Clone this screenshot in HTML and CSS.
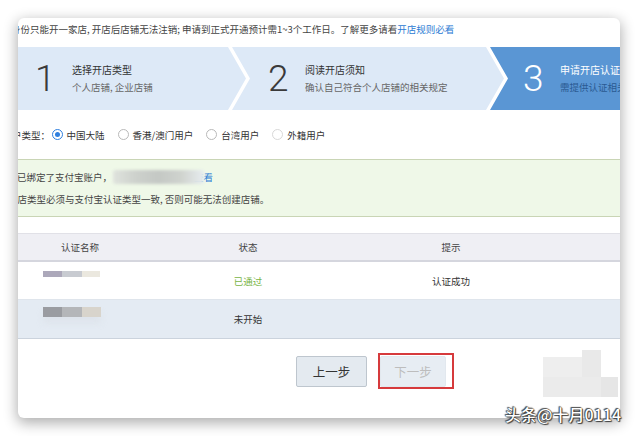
FILE: index.html
```html
<!DOCTYPE html>
<html>
<head>
<meta charset="utf-8">
<title>申请开店认证</title>
<link rel="stylesheet" href="styles.css">
</head>
<body>
<div class="card">
  <div class="notice"><span class="shift-notice">身份只能开一家店, 开店后店铺无法注销; 申请到正式开通预计需1~3个工作日。了解更多请看<a class="link">开店规则必看</a></span></div>

  <div class="steps">
    <div class="step step1">
      <div class="num">1</div>
      <div class="txt"><div class="t">选择开店类型</div><div class="s">个人店铺, 企业店铺</div></div>
    </div>
    <div class="step step2">
      <div class="num">2</div>
      <div class="txt"><div class="t">阅读开店须知</div><div class="s">确认自己符合个人店铺的相关规定</div></div>
    </div>
    <div class="step step3">
      <div class="num">3</div>
      <div class="txt"><div class="t">申请开店认证</div><div class="s">需提供认证相关资料</div></div>
    </div>
  </div>

  <div class="radios">
    <span class="radio-title">用户类型：</span>
    <span class="radio on"></span><span class="radio-label">中国大陆</span>
    <span class="radio"></span><span class="radio-label">香港/澳门用户</span>
    <span class="radio"></span><span class="radio-label">台湾用户</span>
    <span class="radio dim"></span><span class="radio-label">外籍用户</span>
  </div>

  <div class="alert">
    <div class="alert-line"><span class="shift-a1">您已绑定了支付宝账户，</span><span class="blurred"></span><a class="link">查看</a></div>
    <div class="alert-line"><span class="shift-a2">开店类型必须与支付宝认证类型一致, 否则可能无法创建店铺。</span></div>
  </div>

  <div class="table">
    <div class="tr th">
      <div class="cell">认证名称</div>
      <div class="cell">状态</div>
      <div class="cell">提示</div>
      <div class="cell"></div>
    </div>
    <div class="tr row1">
      <div class="cell name"><span class="mask mask1"></span></div>
      <div class="cell ok">已通过</div>
      <div class="cell">认证成功</div>
      <div class="cell"></div>
    </div>
    <div class="tr row2">
      <div class="cell name"><span class="mask mask2"></span></div>
      <div class="cell">未开始</div>
      <div class="cell"></div>
      <div class="cell"></div>
    </div>
  </div>

  <div class="actions">
    <button class="btn prev">上一步</button>
    <button class="btn next" disabled>下一步</button>
  </div>
</div>

<div class="highlight"></div>
<div class="mosaic">
  <span class="m m1"></span><span class="m m2"></span><span class="m m3"></span><span class="m m4"></span>
</div>
<div class="watermark">头条@十月0114</div>
</body>
</html>
```

FILE: styles.css
```css
* { box-sizing: border-box; margin: 0; padding: 0; }
html, body { background: #fff; }
body {
  width: 638px;
  height: 436px;
  overflow: hidden;
  position: relative;
  padding: 18px;
  font-family: "Noto Sans CJK SC", "Noto Sans", sans-serif;
  color: #333;
}

.card {
  width: 602px;
  height: 400px;
  background: #fff;
  border-radius: 6px;
  box-shadow: 0 4px 14px 1px rgba(0, 0, 0, 0.32);
  overflow: hidden;
  display: flex;
  flex-direction: column;
}

.link { color: #2b7bd4; text-decoration: none; }

/* notice */
.notice {
  height: 29px;
  padding-top: 3.5px;
  font-size: 9.5px;
  line-height: 14px;
  white-space: nowrap;
  color: #444;
}
.shift-notice { margin-left: -7px; }

/* steps */
.steps {
  height: 63px;
  display: flex;
  flex: none;
  background: #fff;
}
.step {
  display: flex;
  align-items: center;
  flex: none;
  white-space: nowrap;
  background: #dde9f7;
  min-width: 0;
}
.step1 {
  width: 228px;
  padding-left: 17px;
  clip-path: polygon(0 0, calc(100% - 18px) 0, 100% 50%, calc(100% - 18px) 100%, 0 100%);
}
.step2 {
  width: 272px;
  margin-left: -14px;
  padding-left: 36px;
  clip-path: polygon(0 0, calc(100% - 18px) 0, 100% 50%, calc(100% - 18px) 100%, 0 100%, 18px 50%);
}
.step3 {
  flex: 1;
  margin-left: -14px;
  padding-left: 33px;
  background: #5a96d4;
  clip-path: polygon(0 0, 100% 0, 100% 100%, 0 100%, 18px 50%);
}
.num {
  width: 37px;
  flex: none;
  font-family: Roboto, "Liberation Sans", sans-serif;
  font-weight: 300;
  font-size: 37px;
  line-height: 1;
  color: #3a3a3a;
}
.step3 .num { color: #fff; }
.txt .t { font-size: 10px; line-height: 14px; color: #333; }
.txt .s { font-size: 9.5px; line-height: 14px; color: #666; margin-top: 3.5px; }
.step3 .t { color: #fff; }
.step3 .s { color: #2a5a92; }

/* radios */
.radios {
  height: 49px;
  flex: none;
  display: flex;
  align-items: center;
  font-size: 9.5px;
  white-space: nowrap;
  color: #333;
}
.radio-title { margin-left: -15.5px; margin-right: 1.5px; }
.radio {
  width: 11px;
  height: 11px;
  border: 1px solid #b9b9b9;
  border-radius: 50%;
  background: #fff;
  margin-right: 4px;
  flex: none;
  display: flex;
  align-items: center;
  justify-content: center;
}
.radio.on { border-color: #2f7fdf; }
.radio.on::after {
  content: "";
  width: 5px;
  height: 5px;
  border-radius: 50%;
  background: #2f7fdf;
}
.radio.dim { border-color: #d8d8d8; }
.radio-label { margin-right: 13px; }

/* alert */
.alert {
  height: 58px;
  flex: none;
  background: #eff8e8;
  border-top: 1px solid #c9d5b5;
  border-bottom: 1px solid #c9d5b5;
  padding-top: 6px;
  font-size: 9.5px;
  line-height: 22px;
  white-space: nowrap;
  color: #444;
}
.alert-line { display: flex; align-items: center; height: 22px; }
.shift-a1 { margin-left: -10.5px; }
.shift-a2 { margin-left: -10px; }
.blurred {
  position: relative;
  z-index: 1;
  width: 91px;
  height: 14px;
  margin-left: 1px;
  margin-right: -10px;
  background: linear-gradient(90deg, #dfe3dd 0%, #cdd1cc 25%, #c4c8c4 50%, #cfd3ce 75%, #e6ecef 100%);
  filter: blur(1.5px);
  border-radius: 3px;
}

/* table */
.table { margin-top: 16px; flex: none; font-size: 9.5px; }
.tr {
  display: grid;
  grid-template-columns: 124px 212px 194px 1fr;
  align-items: center;
}
.cell { text-align: center; white-space: nowrap; }
.th {
  height: 29px;
  background: #efeff4;
  border-top: 1px solid #e1e1e7;
  border-bottom: 2px solid #d5d6de;
  color: #444;
}
.row1 { height: 38px; background: #fff; border-bottom: 1px solid #dfe5ec; }
.row2 { height: 39px; background: #e4ebf3; border-bottom: 1px solid #cbd3dd; }
.ok { color: #78b446; }
.name { align-self: start; text-align: left; padding-left: 25px; }
.row1 .name { padding-top: 9px; }
.row2 .name { padding-top: 7px; }
.mask { display: block; filter: blur(0.6px); }
.mask1 {
  width: 57px;
  height: 6px;
  background: linear-gradient(90deg, #aca8ba 0 33%, #c8cbd1 33% 68%, #ebe8df 68% 100%);
}
.mask2 {
  width: 58px;
  height: 10px;
  background: linear-gradient(90deg, #9a9ca1 0 33%, #b4b6b9 33% 68%, #d8d4cc 68% 100%);
  box-shadow: 0 6px 6px rgba(220, 225, 232, 0.7);
}

/* actions */
.actions {
  display: flex;
  padding-top: 17px;
  padding-left: 278px;
  gap: 13px;
}
.btn {
  height: 31px;
  font-family: "Noto Sans CJK SC", sans-serif;
  font-size: 12.5px;
  border-radius: 2px;
  cursor: pointer;
}
.prev {
  width: 71px;
  background: #e4eaf0;
  border: 1px solid #bec6ce;
  color: #333;
}
.next {
  width: 66px;
  background: #e7edf3;
  border: 1px solid #e2e8ee;
  color: #bdbdbd;
}

/* overlays */
.highlight {
  position: absolute;
  left: 378px;
  top: 353px;
  width: 76px;
  height: 36px;
  border: 2px solid #d63a3c;
}
.mosaic {
  position: absolute;
  left: 543px;
  top: 350px;
  width: 75px;
  height: 48px;
}
.m { position: absolute; display: block; }
.m1 { left: 0; top: 7px; width: 39px; height: 20px; background: #eeeeee; }
.m2 { left: 39px; top: 0; width: 19px; height: 27px; background: #e9e9e9; }
.m3 { left: 0; top: 27px; width: 58px; height: 20px; background: #ebebeb; }
.m4 { left: 58px; top: 27px; width: 17px; height: 20px; background: #e6e6e6; }

.watermark {
  position: absolute;
  left: 505px;
  top: 405px;
  font-family: "Noto Sans CJK SC", sans-serif;
  font-size: 16px;
  line-height: 18px;
  font-weight: 500;
  color: #fff;
  white-space: nowrap;
  text-shadow: 0 0 1px #222, 0 0 1px #222, 1px 1px 1px #444, -1px -1px 1px #555;
}
```
